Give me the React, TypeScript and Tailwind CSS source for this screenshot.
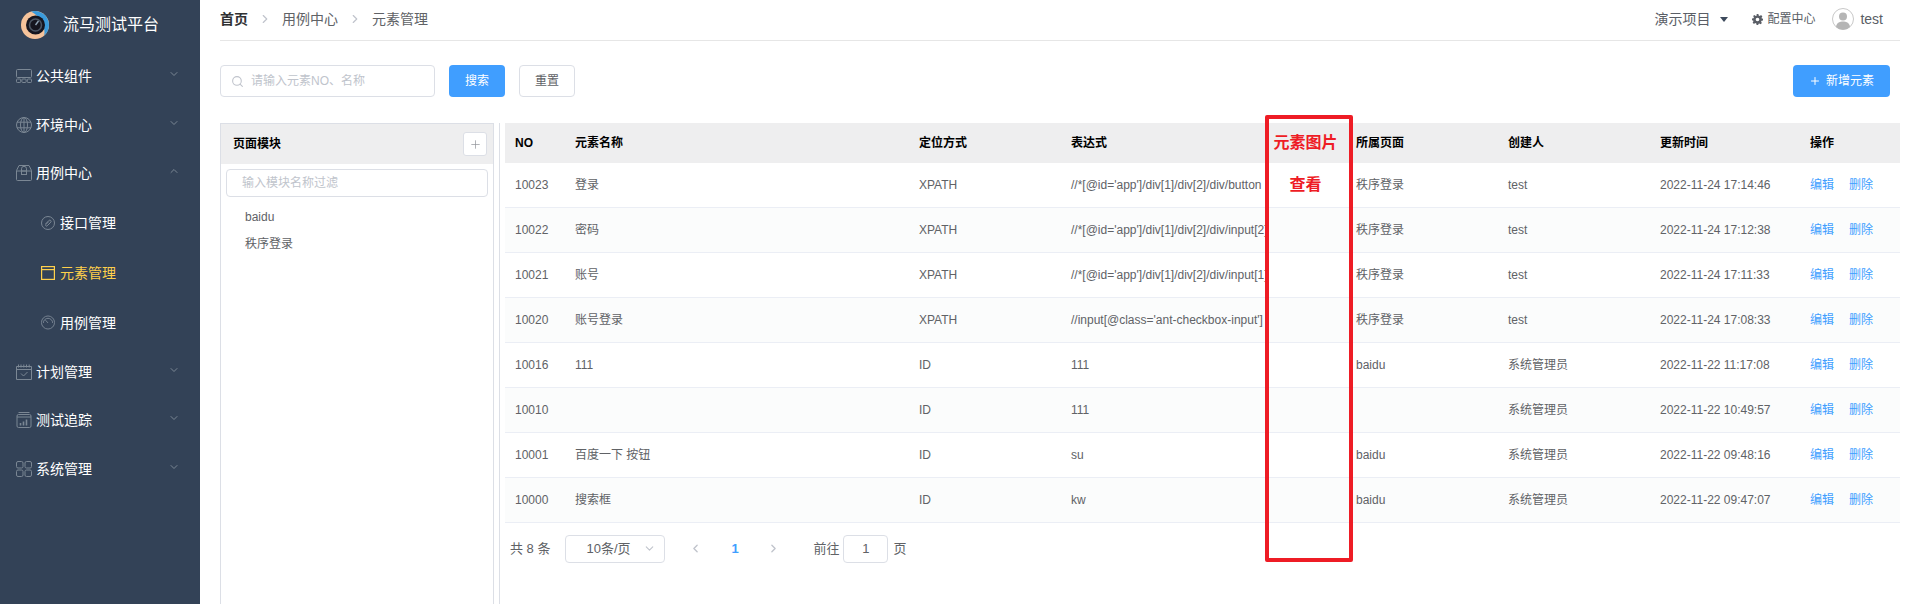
import React from 'react';
import { ChevronDown, ChevronUp, ChevronLeft, ChevronRight, Search, Plus } from 'lucide-react';

const Logo = () => (
  <svg viewBox="0 0 28 28" className="w-7 h-7 shrink-0">
    <circle cx="14" cy="14" r="14" fill="#f6c39b" />
    <path d="M10 .6A14 14 0 0 1 28 14a14 14 0 0 1-5 10.7C25 18 21 6 10 .6z" fill="#3a9bdc" />
    <circle cx="14.5" cy="14" r="9.5" fill="#15151f" />
    <circle cx="14.5" cy="14" r="6" fill="none" stroke="#4b5563" strokeWidth="1.6" />
    <path d="M14.5 14l3-4" stroke="#8fa3b5" strokeWidth="1.4" />
  </svg>
);

const iconProps = { fill: 'none', stroke: 'currentColor', strokeWidth: 1 };

const BoardIcon = () => (
  <svg viewBox="0 0 16 14" className="w-4 h-[14px]" {...iconProps}>
    <rect x=".5" y=".5" width="15" height="8" rx="1" />
    <rect x=".5" y="10" width="4.2" height="3.5" rx=".8" />
    <rect x="5.9" y="10" width="4.2" height="3.5" rx=".8" />
    <rect x="11.3" y="10" width="4.2" height="3.5" rx=".8" />
  </svg>
);
const GlobeIcon = () => (
  <svg viewBox="0 0 16 16" className="w-4 h-4" {...iconProps}>
    <circle cx="8" cy="8" r="7.5" />
    <ellipse cx="8" cy="8" rx="3.5" ry="7.5" />
    <path d="M8 .5v15M1 5.2h14M1 10.8h14" />
  </svg>
);
const CaseIcon = () => (
  <svg viewBox="0 0 16 16" className="w-4 h-4" {...iconProps}>
    <path d="M3 .5h10l2.5 5v9a1 1 0 0 1-1 1h-13a1 1 0 0 1-1-1v-9z" />
    <path d="M.5 6h15" />
    <path d="M5.5 6V3.8a2.5 2.5 0 0 1 5 0V6" />
    <rect x="5.5" y="6" width="5" height="3.5" />
  </svg>
);
const LinkIcon = () => (
  <svg viewBox="0 0 14 14" className="w-[14px] h-[14px]" {...iconProps}>
    <circle cx="7" cy="7" r="6.5" />
    <path d="M4.5 8l3.6-3.7a1.3 1.3 0 0 1 1.8 1.8L6.2 9.8a.9.9 0 0 1-1.4-1.3l3-3" />
  </svg>
);
const WindowIcon = () => (
  <svg viewBox="0 0 14 14" className="w-[14px] h-[14px]" fill="none" stroke="currentColor" strokeWidth="1.2">
    <rect x=".6" y=".6" width="12.8" height="12.8" />
    <path d="M.6 3.6h12.8" />
  </svg>
);
const GaugeIcon = () => (
  <svg viewBox="0 0 15 15" className="w-[15px] h-[15px]" {...iconProps}>
    <circle cx="7.5" cy="7.5" r="7" />
    <path d="M2.5 8a5 5 0 0 1 10 0" />
    <path d="M7.5 8L4.8 5" />
  </svg>
);
const CalendarIcon = () => (
  <svg viewBox="0 0 16 16" className="w-4 h-4" {...iconProps}>
    <path d="M.5 2.5h15v13H.5z" />
    <path d="M.5 5.5h15M2.5 .5v3M5 .5v3M7.8 .5v3M10.5 .5v3M13.2 .5v3" />
    <path d="M5 9.5l2.5 2.5 4-4" />
  </svg>
);
const ReportIcon = () => (
  <svg viewBox="0 0 16 16" className="w-4 h-4" {...iconProps}>
    <rect x="1" y="2.5" width="14" height="13" rx="1.5" />
    <path d="M2.5 .5h11M1 5h14" />
    <path d="M4.5 11v2.5M7.5 9.5v4M10.5 7.5v6" strokeWidth="1.6" />
  </svg>
);
const GridIcon = () => (
  <svg viewBox="0 0 16 16" className="w-4 h-4" {...iconProps}>
    <rect x=".5" y=".5" width="6.5" height="6.5" rx="1.5" />
    <rect x="9" y=".5" width="6.5" height="6.5" rx="1.5" />
    <rect x=".5" y="9" width="6.5" height="6.5" rx="1.5" />
    <rect x="9" y="9" width="6.5" height="6.5" rx="1.5" />
  </svg>
);

const MenuItem = ({ icon, label, open }: { icon: React.ReactNode; label: string; open?: boolean }) => (
  <div className="h-[48.5px] flex items-center pl-4 pr-[20px] text-sm text-white">
    <span className="w-4 flex justify-center text-[#7b8794]">{icon}</span>
    <span className="ml-1 flex-1">{label}</span>
    {open ? (
      <ChevronUp className="w-3 h-3 -mt-1 text-[#7b8794]" />
    ) : (
      <ChevronDown className="w-3 h-3 -mt-1 text-[#7b8794]" />
    )}
  </div>
);

const SubItem = ({ icon, label, active }: { icon: React.ReactNode; label: string; active?: boolean }) => (
  <div className={`h-[50px] flex items-center pl-[41px] text-sm ${active ? 'text-[#ffd04b]' : 'text-white'}`}>
    <span className={`w-[14px] flex justify-center ${active ? '' : 'text-[#7b8794]'}`}>{icon}</span>
    <span className="ml-[5px]">{label}</span>
  </div>
);

const Sidebar = () => (
  <aside className="w-[200px] shrink-0 h-full bg-[#334257]">
    <div className="h-[52px] flex items-center pl-[21px] pb-[3px]">
      <Logo />
      <span className="ml-[14px] text-base text-white">流马测试平台</span>
    </div>
    <MenuItem icon={<BoardIcon />} label="公共组件" />
    <MenuItem icon={<GlobeIcon />} label="环境中心" />
    <MenuItem icon={<CaseIcon />} label="用例中心" open />
    <SubItem icon={<LinkIcon />} label="接口管理" />
    <SubItem icon={<WindowIcon />} label="元素管理" active />
    <SubItem icon={<GaugeIcon />} label="用例管理" />
    <MenuItem icon={<CalendarIcon />} label="计划管理" />
    <MenuItem icon={<ReportIcon />} label="测试追踪" />
    <MenuItem icon={<GridIcon />} label="系统管理" />
  </aside>
);

const Header = () => (
  <header className="h-[41px] ml-5 mr-5 border-b border-[#e6e6e6] flex items-center text-sm pb-[2px]">
    <span className="font-bold text-[#303133]">首页</span>
    <ChevronRight className="w-[14px] h-[14px] mx-[10px] text-[#c0c4cc]" />
    <span className="text-[#606266]">用例中心</span>
    <ChevronRight className="w-[14px] h-[14px] mx-[10px] text-[#c0c4cc]" />
    <span className="text-[#606266]">元素管理</span>
    <div className="ml-auto flex items-center text-[#5a5e66] mr-[17px]">
      <span>演示项目</span>
      <span className="ml-[10px] w-0 h-0 border-x-[4px] border-x-transparent border-t-[5px] border-t-[#3d4a5c]" />
      <svg viewBox="0 0 12 12" className="ml-[24px] w-[11px] h-[11px]" fill="#5a5e66">
        <path d="M5 0h2l.3 1.6 1.2.5L9.9 1.200l1.400 1.400-.9 1.400.5 1.200L12 5v2l-1.600.3-.5 1.200.9 1.400-1.400 1.400-1.400-.9-1.200.5L7 12H5l-.3-1.600-1.200-.5-1.400.9-1.400-1.400.9-1.400-.5-1.200L0 7V5l1.600-.3.5-1.200-.9-1.400L2.600 1.200l1.400.9 1.200-.5zM6 4a2 2 0 1 0 0 4 2 2 0 0 0 0-4z" fillRule="evenodd" />
      </svg>
      <span className="ml-[4px] text-xs">配置中心</span>
      <svg viewBox="0 0 22 22" className="ml-[17px] w-[22px] h-[22px]">
        <circle cx="11" cy="11" r="10.500" fill="#fff" stroke="#c8c8c8" />
        <circle cx="11" cy="8.500" r="4" fill="#b5b5b5" />
        <path d="M4 19c1-5 4-5.500 7-5.500s6 .5 7 5.500a10 10 0 0 1-14 0z" fill="#b5b5b5" />
      </svg>
      <span className="ml-[6px]">test</span>
    </div>
  </header>
);

const Toolbar = () => (
  <div className="flex items-center mt-6 ml-5 mr-[30px] text-xs">
    <div className="w-[215px] h-8 border border-[#dcdfe6] rounded flex items-center pl-[10px]">
      <Search className="w-[13px] h-[13px] text-[#c0c4cc]" />
      <span className="ml-[7px] text-[#c0c4cc]">请输入元素NO、名称</span>
    </div>
    <button className="ml-[14px] w-14 h-8 rounded bg-[#409eff] text-white">搜索</button>
    <button className="ml-[14px] w-14 h-8 rounded border border-[#dcdfe6] text-[#606266]">重置</button>
    <button className="ml-auto w-[97px] h-8 rounded bg-[#409eff] text-white flex items-center justify-center">
      <Plus className="w-3 h-3" />
      <span className="ml-[5px]">新增元素</span>
    </button>
  </div>
);

const ModulePanel = () => (
  <div className="w-[274px] shrink-0 h-full border border-b-0 border-[#dcdfe6] text-xs">
    <div className="h-10 bg-[#eeeeef] flex items-center justify-between pl-3 pr-[6px]">
      <span className="font-bold text-black">页面模块</span>
      <span className="w-6 h-6 bg-white border border-[#dcdfe6] rounded-[3px] flex items-center justify-center text-[#909399]">
        <Plus className="w-[13px] h-[13px]" strokeWidth={1.3} />
      </span>
    </div>
    <div className="mx-[5px] mt-[5px] h-7 border border-[#dcdfe6] rounded flex items-center pl-[15px] text-[#c0c4cc]">
      输入模块名称过滤
    </div>
    <div className="mt-[7px] pl-[24px] text-[#606266]">
      <div className="h-[27px] leading-[27px]">baidu</div>
      <div className="h-[27px] leading-[27px]">秩序登录</div>
    </div>
  </div>
);

const rows = [
  ['10023', '登录', 'XPATH', "//*[@id='app']/div[1]/div[2]/div/button", '秩序登录', 'test', '2022-11-24 17:14:46'],
  ['10022', '密码', 'XPATH', "//*[@id='app']/div[1]/div[2]/div/input[2]", '秩序登录', 'test', '2022-11-24 17:12:38'],
  ['10021', '账号', 'XPATH', "//*[@id='app']/div[1]/div[2]/div/input[1]", '秩序登录', 'test', '2022-11-24 17:11:33'],
  ['10020', '账号登录', 'XPATH', "//input[@class='ant-checkbox-input']", '秩序登录', 'test', '2022-11-24 17:08:33'],
  ['10016', '111', 'ID', '111', 'baidu', '系统管理员', '2022-11-22 11:17:08'],
  ['10010', '', 'ID', '111', '', '系统管理员', '2022-11-22 10:49:57'],
  ['10001', '百度一下 按钮', 'ID', 'su', 'baidu', '系统管理员', '2022-11-22 09:48:16'],
  ['10000', '搜索框', 'ID', 'kw', 'baidu', '系统管理员', '2022-11-22 09:47:07'],
];

const cell = 'px-[10px] overflow-hidden whitespace-nowrap text-left';

const ElementTable = () => (
  <table className="w-[1395px] table-fixed border-collapse text-xs text-[#606266]">
    <colgroup>
      <col className="w-[60px]" />
      <col className="w-[344px]" />
      <col className="w-[152px]" />
      <col className="w-[204px]" />
      <col className="w-[81px]" />
      <col className="w-[152px]" />
      <col className="w-[152px]" />
      <col className="w-[150px]" />
      <col className="w-[100px]" />
    </colgroup>
    <thead>
      <tr className="h-10 bg-[#eeeeef] text-black">
        {['NO', '元素名称', '定位方式', '表达式'].map((h) => (
          <th key={h} className={`${cell} font-bold`}>{h}</th>
        ))}
        <th className="font-bold text-base text-[#ee1c25] text-center whitespace-nowrap">元素图片</th>
        {['所属页面', '创建人', '更新时间', '操作'].map((h) => (
          <th key={h} className={`${cell} font-bold`}>{h}</th>
        ))}
      </tr>
    </thead>
    <tbody>
      {rows.map((r, i) => (
        <tr key={r[0]} className={`h-[44.875px] border-b border-[#ebeef5] ${i % 2 === 1 ? 'bg-[#fbfcfc]' : 'bg-white'}`}>
          <td className={cell}>{r[0]}</td>
          <td className={cell}>{r[1]}</td>
          <td className={cell}>{r[2]}</td>
          <td className={cell}>{r[3]}</td>
          <td className="text-center font-bold text-base text-[#ee1c25]">{i === 0 ? '查看' : ''}</td>
          <td className={cell}>{r[4]}</td>
          <td className={cell}>{r[5]}</td>
          <td className={cell}>{r[6]}</td>
          <td className={`${cell} text-[#409eff]`}>
            <span>编辑</span>
            <span className="ml-[15px]">删除</span>
          </td>
        </tr>
      ))}
    </tbody>
  </table>
);

const Pagination = () => (
  <div className="flex items-center mt-[12px] ml-[5px] text-[13px] text-[#606266]">
    <span>共 8 条</span>
    <div className="ml-[15px] w-[100px] h-7 border border-[#dcdfe6] rounded flex items-center pl-5 pr-[8px]">
      <span className="flex-1">10条/页</span>
      <ChevronDown className="w-[13px] h-[13px] text-[#c0c4cc]" />
    </div>
    <ChevronLeft className="ml-[24px] w-[13px] h-[13px] text-[#c0c4cc]" strokeWidth={2.500} />
    <span className="ml-[29px] w-2 font-bold text-[#409eff]">1</span>
    <ChevronRight className="ml-[28px] w-[13px] h-[13px] text-[#c0c4cc]" strokeWidth={2.500} />
    <span className="ml-[33px]">前往</span>
    <div className="ml-1 w-[45px] h-7 border border-[#dcdfe6] rounded flex items-center justify-center">1</div>
    <span className="ml-[5px]">页</span>
  </div>
);

export default function App() {
  return (
    <div
      className="relative flex w-[1920px] h-[604px] overflow-hidden bg-white"
      style={{ fontFamily: '"Liberation Sans", "Noto Sans CJK SC", sans-serif' }}
    >
      <Sidebar />
      <main className="flex-1 min-w-0 flex flex-col">
        <Header />
        <Toolbar />
        <div className="flex-1 min-h-0 flex mt-[26px] ml-5">
          <ModulePanel />
          <div className="ml-[5px] mr-[5px] w-px bg-[#dcdfe6]" />
          <div>
            <ElementTable />
            <Pagination />
          </div>
        </div>
      </main>
      {/* red annotation box over the image column */}
      <div className="absolute left-[1265px] top-[115px] w-[88px] h-[447px] border-4 border-[#ee1c25] rounded-[2px] pointer-events-none" />
    </div>
  );
}
